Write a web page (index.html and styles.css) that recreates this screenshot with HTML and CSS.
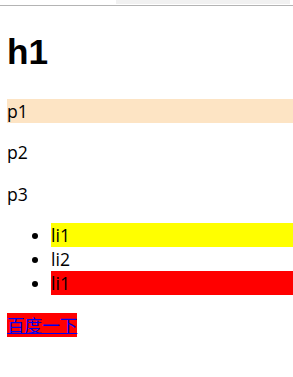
FILE: index.html
```html
<!DOCTYPE html>
<html>
<head>
<meta charset="utf-8">
<link rel="stylesheet" href="styles.css">
</head>
<body>
<div class="chrome"><div class="tab"></div></div>
<main class="page">
  <h1 class="title">h1</h1>
  <p class="para para-bisque">p1</p>
  <p class="para">p2</p>
  <p class="para">p3</p>
  <ul class="list">
    <li class="item item-yellow">li1</li>
    <li class="item">li2</li>
    <li class="item item-red">li1</li>
  </ul>
  <a class="link" href="#">百度一下</a>
</main>
</body>
</html>
```
FILE: styles.css
```css
html, body {
  margin: 0;
  padding: 0;
  background: #fff;
}
body {
  font-family: "Open Sans", "Noto Sans CJK SC", sans-serif;
  font-size: 17.6px;
  color: #000;
}
.chrome {
  height: 5px;
  border-bottom: 1px solid #b4b4b4;
}
.tab {
  margin-left: 116px;
  width: 174px;
  height: 4px;
  background: #f1f1f1;
}
.page {
  padding: 0 0 0 7px;
  display: flow-root;
}
.title {
  font-family: "Liberation Sans", Arial, sans-serif;
  font-size: 35.2px;
  font-weight: bold;
  line-height: 47px;
  margin: 22px 0 23.6px;
}
.para {
  margin: 17.6px 0;
  line-height: 24px;
}
.para-bisque {
  background: #fde4c4;
}
.list {
  margin: 17.6px 0;
  padding-left: 44px;
  line-height: 24px;
}
.item-yellow {
  background: #ffff00;
}
.item-red {
  background: #ff0000;
}
.link {
  background: #ff0000;
  color: #0000ee;
  text-decoration: underline;
  line-height: 24px;
}
```
